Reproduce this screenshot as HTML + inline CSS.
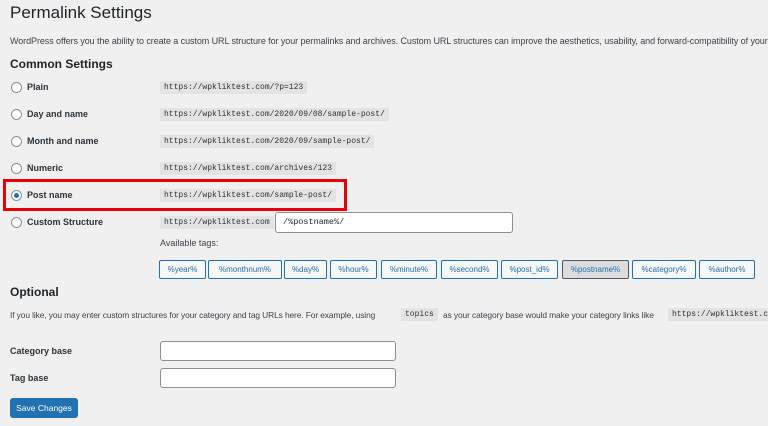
<!DOCTYPE html>
<html><head><style>
body{margin:0;width:768px;height:426px;background:#f0f0f1;font-family:"Liberation Sans",sans-serif;color:#1d2327;position:relative;overflow:hidden}
.a{position:absolute;white-space:nowrap}
.t{font-size:9px}
.b{font-weight:bold;font-size:9px;color:#2c3338}
h1{position:absolute;left:10px;top:3px;margin:0;font-size:17px;font-weight:normal;color:#1d2327}
h2{position:absolute;margin:0;font-size:12px;font-weight:bold;left:10px}
code{position:absolute;font-family:"Liberation Mono",monospace;font-size:8px;background:#e3e3e4;padding:2px 4px;white-space:nowrap;color:#2c3338}
.r{position:absolute;left:11px;width:9px;height:9px;border:1px solid #8c8f94;border-radius:50%;background:#fff}
.r.on::after{content:"";position:absolute;left:2px;top:2px;width:5px;height:5px;border-radius:50%;background:#2271b1}
.tag{position:absolute;top:260px;height:17px;border:1px solid #2271b1;border-radius:2px;background:#f6f7f7;color:#2271b1;font-size:8px;line-height:17px;text-align:center}
.in{position:absolute;background:#fff;border:1px solid #8c8f94;border-radius:3px}
</style></head><body>
<h1>Permalink Settings</h1>
<div class="a t" style="left:10px;top:36px;color:#3c434a;letter-spacing:-0.08px">WordPress offers you the ability to create a custom URL structure for your permalinks and archives. Custom URL structures can improve the aesthetics, usability, and forward-compatibility of your <span style="color:#d63638">li</span></div>
<h2 style="top:57px">Common Settings</h2>
<div class="r" style="top:82px"></div><div class="a b" style="left:27px;top:82px">Plain</div><code style="left:160px;top:81px">https://wpkliktest.com/?p=123</code>
<div class="r" style="top:109px"></div><div class="a b" style="left:27px;top:109px">Day and name</div><code style="left:160px;top:108px">https://wpkliktest.com/2020/09/08/sample-post/</code>
<div class="r" style="top:136px"></div><div class="a b" style="left:27px;top:136px">Month and name</div><code style="left:160px;top:135px">https://wpkliktest.com/2020/09/sample-post/</code>
<div class="r" style="top:163px"></div><div class="a b" style="left:27px;top:163px">Numeric</div><code style="left:160px;top:162px">https://wpkliktest.com/archives/123</code>
<div class="r on" style="top:190px"></div><div class="a b" style="left:27px;top:190px">Post name</div><code style="left:160px;top:189px">https://wpkliktest.com/sample-post/</code>
<div class="a" style="left:3px;top:179px;width:338px;height:26px;border:3px solid #e8000b"></div>
<div class="r" style="top:217px"></div><div class="a b" style="left:27px;top:217px">Custom Structure</div><code style="left:160px;top:216px">https://wpkliktest.com</code>
<div class="in" style="left:275px;top:212px;width:236px;height:19px"></div>
<div class="a" style="left:283px;top:217px;font-family:'Liberation Mono',monospace;font-size:8.5px">/%postname%/</div>
<div class="a t" style="left:160px;top:238px;color:#3c434a">Available tags:</div>
<div class="tag" style="left:159px;width:45px">%year%</div>
<div class="tag" style="left:208px;width:72px">%monthnum%</div>
<div class="tag" style="left:284px;width:41px">%day%</div>
<div class="tag" style="left:330px;width:45px">%hour%</div>
<div class="tag" style="left:381px;width:54px">%minute%</div>
<div class="tag" style="left:441px;width:55px">%second%</div>
<div class="tag" style="left:501px;width:55px">%post_id%</div>
<div class="tag" style="left:562px;width:65px;background:#dcdcde;border-color:#50575e;color:#2271b1">%postname%</div>
<div class="tag" style="left:632px;width:62px">%category%</div>
<div class="tag" style="left:699px;width:54px">%author%</div>
<h2 style="top:285px">Optional</h2>
<div class="a" style="left:10px;top:310px;color:#3c434a;font-size:8.4px;letter-spacing:-0.1px">If you like, you may enter custom structures for your category and tag URLs here. For example, using</div>
<code style="left:401px;top:308px">topics</code>
<div class="a" style="left:443px;top:310px;color:#3c434a;font-size:8.4px;letter-spacing:-0.1px">as your category base would make your category links like</div>
<code style="left:668px;top:308px">https://wpkliktest.com</code>
<div class="a b" style="left:10px;top:346px">Category base</div>
<div class="in" style="left:160px;top:341px;width:234px;height:18px"></div>
<div class="a b" style="left:10px;top:373px">Tag base</div>
<div class="in" style="left:160px;top:368px;width:234px;height:18px"></div>
<div class="a" style="left:10px;top:398px;width:68px;height:20px;background:#2271b1;border-radius:3px;color:#fff;font-size:8.5px;line-height:20px;text-align:center">Save Changes</div>
</body></html>
